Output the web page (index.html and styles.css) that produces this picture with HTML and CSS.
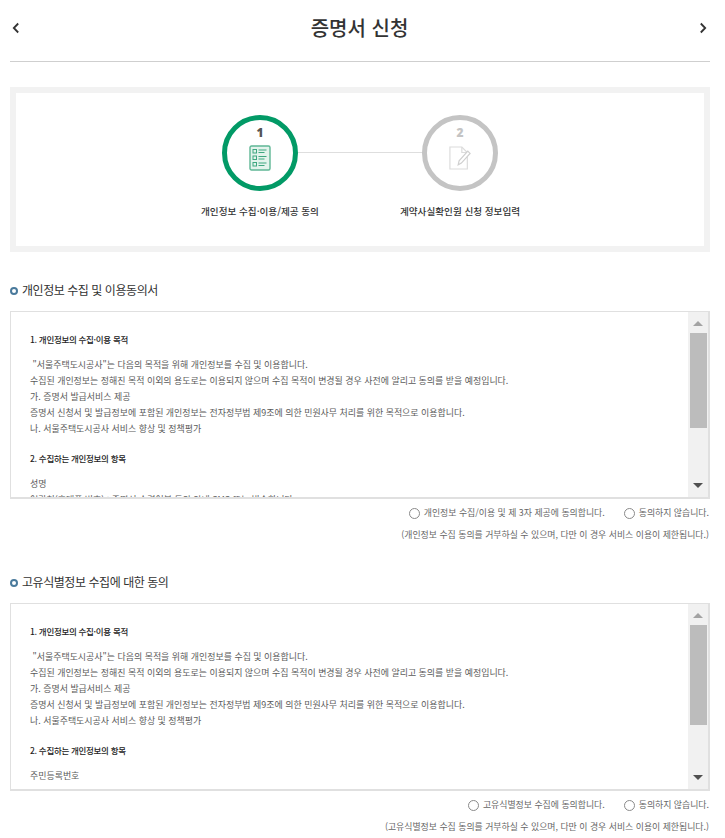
FILE: index.html
```html
<!DOCTYPE html>
<html lang="ko">
<head>
<meta charset="utf-8">
<title>증명서 신청</title>
<link rel="stylesheet" href="styles.css">
</head>
<body>
<header class="top">
  <svg class="chev" viewBox="0 0 8 12"><path d="M6.200 1.500 1.800 6l4.400 4.500" fill="none" stroke="#333" stroke-width="1.800"/></svg>
  <h1>증명서 신청</h1>
  <svg class="chev" viewBox="0 0 8 12"><path d="M1.800 1.500 6.200 6l-4.400 4.500" fill="none" stroke="#333" stroke-width="1.800"/></svg>
</header>
<section class="steps">
  <div class="track">
    <span class="connector"></span>
    <div class="step">
      <div class="circle on">
        <b class="num">1</b>
        <svg class="ico" viewBox="0 0 22 26">
          <rect x="1" y="1" width="20" height="24" rx="1.500" fill="#e3f3ec" stroke="#5fb795" stroke-width="1.400"/>
          <g fill="none" stroke="#3fa780" stroke-width="1">
            <rect x="4" y="4.500" width="3.500" height="3.500"/><rect x="4" y="11" width="3.500" height="3.500"/><rect x="4" y="17.500" width="3.500" height="3.500"/>
          </g>
          <g stroke="#3fa780" stroke-width="1.200">
            <path d="M9.500 5h8M9.500 7.500h6M9.500 11.500h8M9.500 14h6M9.500 18h8M9.500 20.500h6"/>
          </g>
        </svg>
      </div>
      <p class="label">개인정보 수집·이용/제공 동의</p>
    </div>
    <div class="step">
      <div class="circle off">
        <b class="num">2</b>
        <svg class="ico" viewBox="0 0 24 26">
          <path d="M1 1h13l6 6v18H1z" fill="#fff" stroke="#dcdcdc" stroke-width="1.300"/>
          <path d="M14 1v6h6" fill="none" stroke="#dcdcdc" stroke-width="1.300"/>
          <path d="M10 20.500l1-4.500 9.500-10.500 2.500 2.500-9.500 10.500z" fill="#fff" stroke="#cfcfcf" stroke-width="1.300"/>
        </svg>
      </div>
      <p class="label">계약사실확인원 신청 정보입력</p>
    </div>
  </div>
</section>

<section class="agree first">
  <h2><i class="dot"></i>개인정보 수집 및 이용동의서</h2>
  <div class="box">
    <div class="doc">
      <h3>1. 개인정보의 수집·이용 목적</h3>
      <p class="lines">&nbsp;"서울주택도시공사"는 다음의 목적을 위해 개인정보를 수집 및 이용합니다.<br>수집된 개인정보는 정해진 목적 이외의 용도로는 이용되지 않으며 수집 목적이 변경될 경우 사전에 알리고 동의를 받을 예정입니다.<br>가. 증명서 발급서비스 제공<br>증명서 신청서 및 발급정보에 포함된 개인정보는 전자정부법 제9조에 의한 민원사무 처리를 위한 목적으로 이용합니다.<br>나. 서울주택도시공사 서비스 향상 및 정책평가</p>
      <h3>2. 수집하는 개인정보의 항목</h3>
      <p class="lines">성명<br>연락처(휴대폰 번호) : 증명서 수령여부 등의 안내 SMS 또는 발송합니다.</p>
    </div>
    <div class="bar"><span class="up"></span><span class="thumb"></span><span class="down"></span></div>
  </div>
  <div class="radios">
    <label><i class="radio"></i>개인정보 수집/이용 및 제 3자 제공에 동의합니다.</label>
    <label><i class="radio"></i>동의하지 않습니다.</label>
  </div>
  <p class="note">(개인정보 수집 동의를 거부하실 수 있으며, 다만 이 경우 서비스 이용이 제한됩니다.)</p>
</section>

<section class="agree">
  <h2><i class="dot"></i>고유식별정보 수집에 대한 동의</h2>
  <div class="box">
    <div class="doc">
      <h3>1. 개인정보의 수집·이용 목적</h3>
      <p class="lines">&nbsp;"서울주택도시공사"는 다음의 목적을 위해 개인정보를 수집 및 이용합니다.<br>수집된 개인정보는 정해진 목적 이외의 용도로는 이용되지 않으며 수집 목적이 변경될 경우 사전에 알리고 동의를 받을 예정입니다.<br>가. 증명서 발급서비스 제공<br>증명서 신청서 및 발급정보에 포함된 개인정보는 전자정부법 제9조에 의한 민원사무 처리를 위한 목적으로 이용합니다.<br>나. 서울주택도시공사 서비스 향상 및 정책평가</p>
      <h3>2. 수집하는 개인정보의 항목</h3>
      <p class="lines">주민등록번호</p>
    </div>
    <div class="bar"><span class="up"></span><span class="thumb tall"></span><span class="down"></span></div>
  </div>
  <div class="radios">
    <label><i class="radio"></i>고유식별정보 수집에 동의합니다.</label>
    <label><i class="radio"></i>동의하지 않습니다.</label>
  </div>
  <p class="note">(고유식별정보 수집 동의를 거부하실 수 있으며, 다만 이 경우 서비스 이용이 제한됩니다.)</p>
</section>
</body>
</html>
```
FILE: styles.css
```css
* { box-sizing: border-box; }
html, body { margin: 0; padding: 0; background: #fff; overflow: hidden; }
body {
  width: 725px;
  height: 838px;
  padding: 0 15px 0 10px;
  font-family: "Noto Sans CJK KR", "Noto Sans", sans-serif;
  color: #555;
}
.top {
  height: 62px;
  border-bottom: 1px solid #cfcfcf;
  display: flex;
  align-items: center;
  justify-content: space-between;
  padding: 0 3px 6px 2px;
}
.top h1 {
  margin: 0;
  font-size: 20px;
  font-weight: 500;
  color: #333;
  line-height: 28px;
}
.chev { width: 8px; height: 12px; }
.steps {
  margin-top: 25px;
  height: 165px;
  border: 6px solid #f2f2f2;
  padding-top: 22px;
}
.track {
  position: relative;
  display: flex;
  justify-content: center;
}
.connector {
  position: absolute;
  left: 270px;
  width: 140px;
  top: 37px;
  height: 1px;
  background: #dedede;
}
.step {
  width: 200px;
  display: flex;
  flex-direction: column;
  align-items: center;
  position: relative;
}
.circle {
  width: 76px;
  height: 76px;
  border-radius: 50%;
  border: 5px solid;
  background: #fff;
  display: flex;
  flex-direction: column;
  align-items: center;
  padding-top: 5px;
}
.circle.on { border-color: #029a66; }
.circle.off { border-color: #c4c4c4; }
.num {
  font-family: "Open Sans", "Noto Sans", sans-serif;
  font-size: 12px;
  font-weight: 800;
  line-height: 16px;
  color: #555;
}
.off .num { color: #c4c4c4; }
.ico { width: 22px; height: 26px; margin-top: 4px; }
.label {
  margin: 13px 0 0;
  font-size: 9.600px;
  line-height: 14px;
  font-weight: 500;
  color: #333;
}
.agree { padding-top: 29px; }
.agree.first { padding-top: 28px; }
h2 {
  margin: 0;
  height: 20px;
  display: flex;
  align-items: center;
  font-size: 12px;
  letter-spacing: -0.450px;
  font-weight: 400;
  line-height: 20px;
  color: #333;
}
.dot {
  width: 8px;
  height: 8px;
  border: 2px solid #4a7a9c;
  border-radius: 50%;
  margin-right: 4px;
  flex: none;
  position: relative;
  top: 1px;
}
.box {
  margin-top: 11px;
  height: 188px;
  border: 1px solid #e0e0e0;
  border-width: 1px 2px 2px 1px;
  display: flex;
  overflow: hidden;
}
.doc {
  flex: 1;
  padding: 18.500px 0 0 19px;
  font-size: 8.950px;
  line-height: 16px;
  color: #5a5a5a;
  overflow: hidden;
}
.doc h3 {
  margin: 0;
  font-size: 8.500px;
  letter-spacing: -0.300px;
  line-height: 16px;
  font-weight: 500;
  color: #222;
}
.lines { margin: 10px 0 13.500px; }
.bar {
  width: 20px;
  flex: none;
  background: #f1f1f1;
  display: flex;
  flex-direction: column;
  align-items: center;
}
.thumb {
  width: 17px;
  height: 95px;
  background: #bcbcbc;
  margin-top: 7px;
}
.thumb.tall { height: 100px; }
.up, .down {
  width: 0;
  height: 0;
  border-left: 5px solid transparent;
  border-right: 5px solid transparent;
}
.up {
  margin-top: 9px;
  border-bottom: 5px solid #a3a3a3;
}
.down {
  margin-top: auto;
  margin-bottom: 9px;
  border-top: 5px solid #505050;
}
.radios {
  display: flex;
  justify-content: flex-end;
  gap: 19px;
  margin-top: 6px;
  padding-right: 1px;
  height: 16px;
  font-size: 8.900px;
  line-height: 16px;
  color: #666;
}
.radios label { display: flex; align-items: center; }
.radio {
  width: 11px;
  height: 11px;
  border: 1px solid #8a8a8a;
  border-radius: 50%;
  margin-right: 4px;
}
.note {
  margin: 6px 0 0;
  padding-right: 1px;
  text-align: right;
  font-size: 8.900px;
  line-height: 16px;
  color: #666;
}
```
